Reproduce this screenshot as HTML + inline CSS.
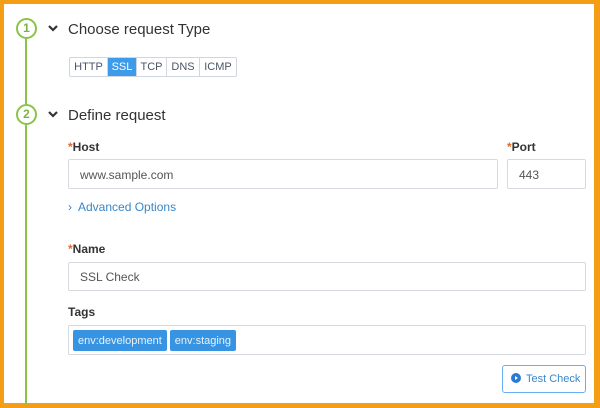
<!DOCTYPE html>
<html><head><style>
*{box-sizing:border-box;margin:0;padding:0}
body{width:600px;height:408px;background:#f59d14;position:relative;overflow:hidden;font-family:"Liberation Sans",sans-serif}
#p{position:absolute;left:4px;top:4px;width:590px;height:399px;background:#fff}
.a{position:absolute}
.circ{width:21px;height:21px;border:2px solid #8bc34a;border-radius:50%;color:#7cb342;font-size:12px;font-weight:bold;text-align:center;line-height:17px;background:#fff}
.line{background:#8bc34a;width:2px}
.title{font-size:15px;color:#333}
.lbl{font-size:12px;font-weight:bold;color:#333}
.lbl b{color:#e8662a}
.inp{border:1px solid #d6dadf;border-radius:2px;font-size:12px;color:#555;padding-left:11px;background:#fff}
.bg{display:flex;border:1px solid #cfd6df;border-radius:2px;height:20px}
.bg span{font-size:11px;color:#4a5563;text-align:center;line-height:19px;border-right:1px solid #cfd6df}
.bg span:last-child{border-right:0}
.bg .on{background:#3d9be9;color:#fff}
.tag{background:#3794e2;color:#e8f2fb;font-size:11px;border-radius:2px;height:21px;line-height:22px;padding:0 5px}
</style></head><body>
<div id="p"></div>
<div class="a line" style="left:25px;top:39px;height:65px"></div>
<div class="a line" style="left:25px;top:125px;height:280px"></div>
<div class="a circ" style="left:16px;top:18px">1</div>
<div class="a circ" style="left:16px;top:104px">2</div>
<svg class="a" style="left:47px;top:24px" width="12" height="10"><path d="M2 2l4 4 4-4" stroke="#333" stroke-width="2.2" fill="none"/></svg>
<svg class="a" style="left:47px;top:110px" width="12" height="10"><path d="M2 2l4 4 4-4" stroke="#333" stroke-width="2.2" fill="none"/></svg>
<div class="a title" style="left:68px;top:21px">Choose request Type</div>
<div class="a title" style="left:68px;top:107px">Define request</div>
<div class="a bg" style="left:69px;top:57px"><span style="width:38px">HTTP</span><span class="on" style="width:29px">SSL</span><span style="width:30px">TCP</span><span style="width:33px">DNS</span><span style="width:36px">ICMP</span></div>
<div class="a lbl" style="left:68px;top:140px"><b>*</b>Host</div>
<div class="a lbl" style="left:507px;top:140px"><b>*</b>Port</div>
<div class="a inp" style="left:68px;top:159px;width:430px;height:30px;line-height:30px">www.sample.com</div>
<div class="a inp" style="left:507px;top:159px;width:79px;height:30px;line-height:30px">443</div>
<div class="a" style="left:68px;top:200px;font-size:12px;color:#3a86c8">›&nbsp; Advanced Options</div>
<div class="a lbl" style="left:68px;top:242px"><b>*</b>Name</div>
<div class="a inp" style="left:68px;top:262px;width:518px;height:29px;line-height:29px">SSL Check</div>
<div class="a lbl" style="left:68px;top:305px">Tags</div>
<div class="a inp" style="left:68px;top:325px;width:518px;height:30px;padding-left:4px;display:flex;gap:3px;align-items:center">
<div class="tag">env:development</div><div class="tag">env:staging</div></div>
<div class="a" style="left:502px;top:365px;width:84px;height:28px;border:1px solid #6aaef0;border-radius:3px;font-size:11px;color:#3a86c8;line-height:26px;padding-left:8px">
<svg width="10" height="10" style="vertical-align:-1px;margin-right:5px"><circle cx="5" cy="5" r="5" fill="#2a7bd6"/><path d="M4 3l3 2-3 2z" fill="#fff"/></svg>Test Check</div>
</body></html>
